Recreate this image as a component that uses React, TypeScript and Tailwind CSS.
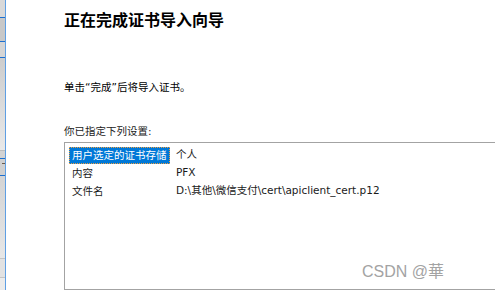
const rows = [
  { name: "用户选定的证书存储", value: "个人", selected: true },
  { name: "内容", value: "PFX", selected: false },
  { name: "文件名", value: "D:\\其他\\微信支付\\cert\\apiclient_cert.p12", selected: false },
];

const uiFont = { fontFamily: '"DejaVu Sans", "Noto Sans CJK SC", sans-serif' };
const markFont = { fontFamily: '"Liberation Sans", "Noto Sans CJK SC", sans-serif' };

const SideStrip = () => (
  <div className="flex flex-col w-[6px] h-full shrink-0 border-r border-[#5f9fe3]">
    <div className="h-[17px] bg-[#d9d9d9]" />
    <div className="h-[1px] bg-[#1c6fcf]" />
    <div className="h-[23px] bg-[#c8c8c8]" />
    <div className="h-[1px] bg-[#1c6fcf]" />
    <div className="h-[15px] bg-[#d5d5d5]" />
    <div className="h-[1px] bg-[#1c6fcf]" />
    <div className="h-[92px] bg-gradient-to-b from-[#cdcdcd] to-[#e9e9e9]" />
    <div className="h-[1px] bg-[#bdbdbd]" />
    <div className="h-[7px] bg-[#d3d3d3]" />
    <div className="h-[1px] bg-[#1c6fcf]" />
    <div className="h-[16px] bg-[#d0d0d0] flex flex-col">
      <div className="h-[4px]" />
      <div className="h-[1px] ml-[2px] w-[3px] bg-[#6b5b4b]" />
    </div>
    <div className="h-[1px] bg-[#1c6fcf]" />
    <div className="h-[82px] bg-gradient-to-b from-[#d4d4d4] to-[#e7e7e7]" />
    <div className="h-[1px] bg-[#c4c4c4]" />
    <div className="h-[18px] bg-[#e2e2e2]" />
    <div className="h-[1px] bg-[#c4c4c4]" />
    <div className="flex-1 bg-[#ebebeb]" />
  </div>
);

export default function App() {
  return (
    <div className="relative flex w-[495px] h-[290px] overflow-hidden bg-white" style={uiFont}>
      <SideStrip />
      <div className="flex flex-col pl-[58px] text-black">
        <h1 className="mt-[10px] h-[22px] leading-[22px] text-[16px] font-bold whitespace-nowrap">
          正在完成证书导入向导
        </h1>
        <p className="mt-[47px] h-[16px] leading-[16px] text-[10.5px] whitespace-nowrap">
          单击“完成”后将导入证书。
        </p>
        <p className="mt-[28px] h-[16px] leading-[16px] text-[10.5px] text-[#222] whitespace-nowrap">
          你已指定下列设置:
        </p>
        <div className="mt-[3px] w-[460px] h-[200px] border border-[#a3a3a3] pt-[3px]">
          {rows.map((r) => (
            <div key={r.name} className="flex items-center h-[18px] text-[10.5px] text-[#1a1a1a] whitespace-nowrap">
              <div className="w-[107px] ml-[4px] shrink-0">
                <span
                  className={
                    r.selected
                      ? "inline-block h-[17px] leading-[17px] px-[3px] bg-[#0078d7] text-white outline outline-1 outline-dotted outline-[#f0a040] -outline-offset-1"
                      : "inline-block h-[17px] leading-[17px] px-[3px]"
                  }
                >
                  {r.name}
                </span>
              </div>
              <span>{r.value}</span>
            </div>
          ))}
        </div>
      </div>
      <span
        className="absolute left-[362px] top-[262px] text-[16px] leading-[20px] text-[#a3a3a3] whitespace-nowrap"
        style={markFont}
      >
        CSDN @華
      </span>
    </div>
  );
}
